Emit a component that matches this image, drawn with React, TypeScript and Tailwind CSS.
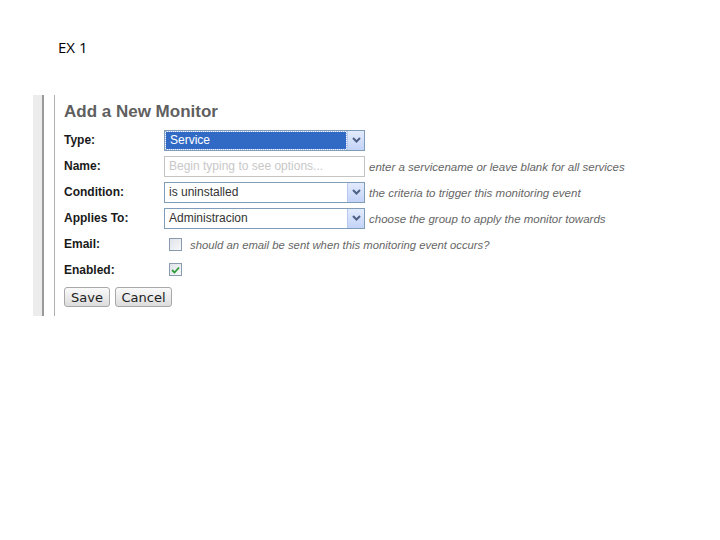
import React from 'react';

const Arrow: React.FC = () => (
  <div className="flex h-full w-[17px] items-center justify-center border-l border-[#b9c9ef] bg-gradient-to-b from-[#e3ebfd] to-[#c3d3f7]">
    <svg width="9" height="6" viewBox="0 0 9 6">
      <path d="M1 1 L4.5 4.5 L8 1" fill="none" stroke="#4d6185" strokeWidth="2" />
    </svg>
  </div>
);

const Select: React.FC<{ value: string; selected?: boolean }> = ({ value, selected }) => (
  <div className="flex h-[21px] w-[201px] items-stretch border border-[#7f9db9] bg-white">
    <div className={`flex flex-1 items-center px-[4px] text-[12px] ${selected ? 'm-[1px] bg-[#316ac5] text-white outline outline-1 outline-dotted outline-[#9fb6e6]' : 'text-[#333]'}`}>{value}</div>
    <Arrow />
  </div>
);

const Help: React.FC<{ children: React.ReactNode }> = ({ children }) => (
  <span className="ml-[4px] pt-[4px] text-[11.5px] italic text-[#666]">{children}</span>
);

const Row: React.FC<{ label: string; h?: string; children: React.ReactNode }> = ({ label, h = 'h-[26px]', children }) => (
  <div className={`flex ${h} items-center`}>
    <div className="w-[100px] text-[12px] font-bold text-[#1a1a1a]">{label}</div>
    {children}
  </div>
);

const Box: React.FC<{ checked?: boolean }> = ({ checked }) => (
  <div className="ml-[5px] flex h-[13px] w-[13px] items-center justify-center border border-[#8a9bb0] bg-gradient-to-br from-[#dfe3e8] to-[#f7f8f9]">
    {checked ? (
      <svg width="9" height="8" viewBox="0 0 9 8">
        <path d="M1 4 L3.5 6.5 L8 1.5" fill="none" stroke="#2f9a3a" strokeWidth="1.8" />
      </svg>
    ) : null}
  </div>
);

const Btn: React.FC<{ label: string; w: string }> = ({ label, w }) => (
  <button type="button" className={`h-[20px] ${w} rounded-[3px] border border-[#a8a8a8] bg-gradient-to-b from-[#fafafa] to-[#dcdcdc] text-[13px] text-[#222] [font-family:'DejaVu_Sans','Liberation_Sans',sans-serif]`}>{label}</button>
);

export default function App() {
  return (
    <div className="h-[540px] w-[720px] bg-white [font-family:'Liberation_Sans',Arial,sans-serif]">
      <p className="pl-[58px] pt-[38px] text-[15px] leading-[18px] text-black [font-family:'Open_Sans','Liberation_Sans',sans-serif]">EX 1</p>

      <div className="ml-[33px] mt-[39px] flex">
        <div className="w-[9px] bg-[#ececec]" />
        <div className="w-[2px] bg-[#9a9a9a]" />
        <div className="w-[10px]" />
        <div className="w-[1px] bg-[#b0b0b0]" />
        <div className="pb-[9px] pl-[9px]">
          <h2 className="flex h-[32px] items-center pt-[2px] text-[17px] font-bold text-[#5f5f5f]">Add a New Monitor</h2>

          <Row label="Type:">
            <Select value="Service" selected />
          </Row>
          <Row label="Name:">
            <div className="flex h-[21px] w-[201px] items-center border border-[#c4c4c4] bg-white px-[4px] text-[12px] text-[#c8c8c8]">Begin typing to see options...</div>
            <Help>enter a servicename or leave blank for all services</Help>
          </Row>
          <Row label="Condition:">
            <Select value="is uninstalled" />
            <Help>the criteria to trigger this monitoring event</Help>
          </Row>
          <Row label="Applies To:">
            <Select value="Administracion" />
            <Help>choose the group to apply the monitor towards</Help>
          </Row>
          <Row label="Email:">
            <Box />
            <span className="ml-[8px] pt-[2px] text-[11.3px] italic text-[#666]">should an email be sent when this monitoring event occurs?</span>
          </Row>
          <Row label="Enabled:" h="h-[25px]">
            <Box checked />
          </Row>

          <div className="mt-[5px] flex gap-[5px]">
            <Btn label="Save" w="w-[46px]" />
            <Btn label="Cancel" w="w-[57px]" />
          </div>
        </div>
      </div>
    </div>
  );
}
